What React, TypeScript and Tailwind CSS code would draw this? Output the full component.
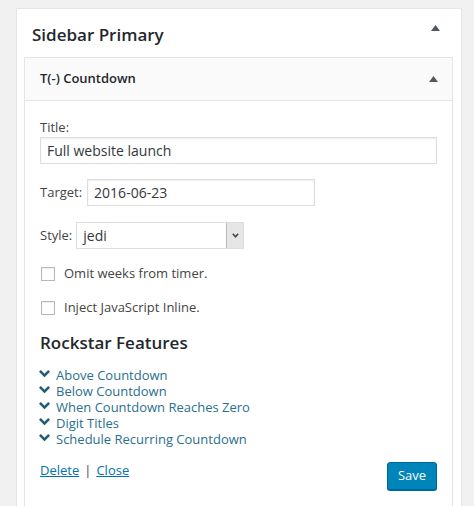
import React from "react"

function UpTriangle() {
  return (
    <svg width="9" height="6" viewBox="0 0 9 6" className="shrink-0">
      <polygon points="4.5,0 9,6 0,6" fill="#50575e" />
    </svg>
  )
}

function Chevron() {
  return (
    <svg width="11" height="8" viewBox="0 0 11 8" className="shrink-0">
      <polygon points="0,1.8 1.8,0 5.5,3.7 9.2,0 11,1.8 5.5,7.3" fill="#1f5a75" />
    </svg>
  )
}

function Checkbox({ label }: { label: string }) {
  return (
    <label className="flex items-center h-[18px]">
      <span className="ml-px w-[14px] h-[14px] border border-[#b4b9be] bg-white shadow-[inset_0_1px_2px_rgba(0,0,0,0.07)]" />
      <span className="ml-[9px] text-[13px] text-[#444]">{label}</span>
    </label>
  )
}

const features = [
  "Above Countdown",
  "Below Countdown",
  "When Countdown Reaches Zero",
  "Digit Titles",
  "Schedule Recurring Countdown",
]

export default function App() {
  return (
    <div
      className="h-[506px] w-[474px] overflow-hidden bg-[#f1f1f1] pt-2 pl-4 pr-3"
      style={{ fontFamily: '"Open Sans", "Liberation Sans", sans-serif' }}
    >
      <div className="h-[520px] bg-white border border-[#e5e5e5] px-[7px] pr-2 shadow-[0_1px_1px_rgba(0,0,0,0.04)]">
        {/* sidebar header */}
        <div className="flex h-[48px] items-center justify-between pl-[8px] pr-[13px]">
          <h2 className="text-[17px] font-semibold text-[#23282d] leading-none mt-[2px]">
            Sidebar Primary
          </h2>
          <div className="-mt-[11px]">
            <UpTriangle />
          </div>
        </div>

        {/* widget */}
        <div className="border border-[#e5e5e5] h-[470px]">
          <div className="flex h-[43px] items-center justify-between bg-[#fafafa] border-b border-[#e5e5e5] pl-[15px] pr-[14px]">
            <span className="text-[13px] font-semibold text-[#23282d]">T(-) Countdown</span>
            <UpTriangle />
          </div>

          <div className="px-[15px] pt-[17px] text-[13px] text-[#444]">
            <div className="leading-[18px]">Title:</div>
            <div className="mt-px h-[27px] border border-[#ddd] bg-white px-[6px] flex items-center text-[14px] text-[#32373c] shadow-[inset_0_1px_2px_rgba(0,0,0,0.07)]">
              Full website launch
            </div>

            <div className="mt-[15px] flex items-center">
              <span>Target:</span>
              <div className="ml-[5px] h-[27px] w-[228px] border border-[#ddd] bg-white px-[6px] flex items-center text-[14px] text-[#32373c] shadow-[inset_0_1px_2px_rgba(0,0,0,0.07)]">
                2016-06-23
              </div>
            </div>

            <div className="mt-[16px] flex items-center">
              <span>Style:</span>
              <div className="ml-[4px] h-[27px] w-[168px] border border-[#ddd] bg-white flex items-stretch">
                <span className="flex-1 flex items-center px-[6px] text-[14px] text-[#32373c]">jedi</span>
                <span className="w-[17px] bg-[#e6e6e6] border-l border-[#bbb] flex items-center justify-center">
                  <svg width="7" height="5" viewBox="0 0 7 5">
                    <polyline points="0.8,0.8 3.5,3.8 6.2,0.8" fill="none" stroke="#444" strokeWidth="1.6" />
                  </svg>
                </span>
              </div>
            </div>

            <div className="mt-[16px]">
              <Checkbox label="Omit weeks from timer." />
            </div>
            <div className="mt-[16px]">
              <Checkbox label="Inject JavaScript Inline." />
            </div>

            <h3 className="mt-[15px] text-[17px] font-semibold text-[#23282d] leading-[22px]">
              Rockstar Features
            </h3>

            <ul className="mt-[13px]">
              {features.map((f) => (
                <li key={f} className="flex items-center h-[16px] text-[13px] leading-[16px] text-[#2a6f8e]">
                  <span className="-ml-[1px] mr-[6px] -mt-[3px]">
                    <Chevron />
                  </span>
                  {f}
                </li>
              ))}
            </ul>

            <div className="mt-[10px] flex items-start justify-between">
              <div className="mt-[4px] text-[13px] text-[#444]">
                <a className="underline text-[#0073aa]">Delete</a>
                <span className="mx-[5px]">|</span>
                <a className="underline text-[#0073aa]">Close</a>
              </div>
              <button className="mt-[5px] h-[28px] w-[50px] rounded-[3px] bg-[#0085ba] border border-[#006799] text-[13px] text-white shadow-[0_1px_0_#006799]">
                Save
              </button>
            </div>
          </div>
        </div>
      </div>
    </div>
  )
}
